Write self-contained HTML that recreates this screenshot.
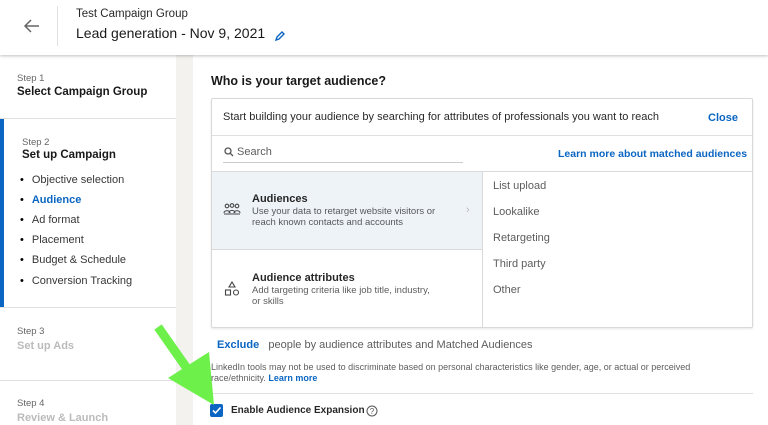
<!DOCTYPE html>
<html><head><style>
*{margin:0;padding:0;box-sizing:border-box}
body{width:768px;height:425px;overflow:hidden;background:#f3f2ef;font-family:"Liberation Sans",Arial,sans-serif;position:relative;color:#000}
.a{position:absolute;white-space:nowrap}
.hdr{left:0;top:0;width:768px;height:55px;background:#fff;box-shadow:0 1px 3px rgba(0,0,0,.25);z-index:2}
.side{left:0;top:55px;width:176px;height:370px;background:#fff}
.main{left:193px;top:55px;width:575px;height:370px;background:#fff}
.sm{font-size:9.5px;color:#666}
.bold{font-size:11.5px;font-weight:bold;color:rgba(0,0,0,.9)}
.li{font-size:11px;color:rgba(0,0,0,.8);left:20px}
.li:before{content:"•";margin-right:8px;color:#000}
.blue{color:#0a66c2}
.g{color:rgba(0,0,0,.65)}
</style></head><body>
<div class="a hdr">
 <svg class="a" style="left:22px;top:16px" width="20" height="20" viewBox="0 0 20 20"><path d="M17 10H3M9 4L3 10l6 6" fill="none" stroke="#666" stroke-width="1.5"/></svg>
 <div class="a" style="left:57px;top:6px;width:1px;height:40px;background:#e0e0e0"></div>
 <div class="a" style="left:76px;top:8px;font-size:11.5px;color:rgba(0,0,0,.85)">Test Campaign Group</div>
 <div class="a" style="left:76px;top:25px;font-size:14px;color:rgba(0,0,0,.9)">Lead generation - Nov 9, 2021</div>
 <svg class="a" style="left:274px;top:30px" width="12" height="12" viewBox="0 0 12 12"><path d="M2 10l1-3 5-5 2 2-5 5z" fill="none" stroke="#0a66c2" stroke-width="1.4"/></svg>
</div>
<div class="a side">
 <div class="a sm" style="left:17px;top:18px">Step 1</div>
 <div class="a bold" style="left:17px;top:31px">Select Campaign Group</div>
 <div class="a" style="left:0;top:63px;width:176px;height:1px;background:#e0e0e0"></div>
 <div class="a" style="left:0;top:64px;width:4px;height:188px;background:#0a66c2"></div>
 <div class="a sm" style="left:22px;top:82px">Step 2</div>
 <div class="a bold" style="left:22px;top:94px">Set up Campaign</div>
 <div class="a li" style="top:119px">Objective selection</div>
 <div class="a li" style="top:139px"><span class="blue" style="font-weight:bold">Audience</span></div>
 <div class="a li" style="top:159px">Ad format</div>
 <div class="a li" style="top:179px">Placement</div>
 <div class="a li" style="top:199px">Budget &amp; Schedule</div>
 <div class="a li" style="top:220px">Conversion Tracking</div>
 <div class="a" style="left:0;top:252px;width:176px;height:1px;background:#e0e0e0"></div>
 <div class="a sm" style="left:17px;top:271px">Step 3</div>
 <div class="a" style="left:17px;top:285px;font-size:11px;font-weight:bold;color:#bbb">Set up Ads</div>
 <div class="a" style="left:0;top:325px;width:176px;height:1px;background:#e0e0e0"></div>
 <div class="a sm" style="left:17px;top:343px">Step 4</div>
 <div class="a" style="left:17px;top:357px;font-size:11px;font-weight:bold;color:#bbb">Review &amp; Launch</div>
</div>
<div class="a main"></div>
<div class="a" style="left:211px;top:74px;font-size:12.5px;font-weight:bold;color:rgba(0,0,0,.9)">Who is your target audience?</div>
<div class="a" style="left:211px;top:98px;width:542px;height:230px;border:1px solid #d9d9d9;border-radius:2px;background:#fff;box-shadow:0 1px 2px rgba(0,0,0,.1)">
 <div class="a" style="left:11px;top:12px;font-size:11px;color:rgba(0,0,0,.85)">Start building your audience by searching for attributes of professionals you want to reach</div>
 <div class="a blue" style="left:496px;top:13px;font-size:11px;font-weight:bold">Close</div>
 <div class="a" style="left:0;top:36px;width:540px;height:1px;background:#e0e0e0"></div>
 <svg class="a" style="left:12px;top:48px" width="10" height="10" viewBox="0 0 10 10"><circle cx="4" cy="4" r="3" fill="none" stroke="#555" stroke-width="1.3"/><path d="M6.3 6.3L9 9" stroke="#555" stroke-width="1.3"/></svg>
 <div class="a g" style="left:25px;top:47px;font-size:11px">Search</div>
 <div class="a" style="left:11px;top:63px;width:240px;height:1px;background:#ccc"></div>
 <div class="a blue" style="left:346px;top:49px;font-size:10.5px;font-weight:bold">Learn more about matched audiences</div>
 <div class="a" style="left:0;top:72px;width:540px;height:1px;background:#d9d9d9"></div>
 <div class="a" style="left:0;top:73px;width:270px;height:77px;background:#eef3f8"></div>
 <div class="a" style="left:270px;top:73px;width:1px;height:156px;background:#d9d9d9"></div>
 <div class="a" style="left:0;top:150px;width:270px;height:1px;background:#d9d9d9"></div>
 <svg class="a" style="left:11px;top:104px" width="18" height="12" viewBox="0 0 18 12" fill="none" stroke="#444" stroke-width="1.1"><circle cx="4" cy="3" r="1.8"/><circle cx="9" cy="2.5" r="1.8"/><circle cx="14" cy="3" r="1.8"/><path d="M1 10c0-3 6-3 6 0M6 10c0-3.5 6-3.5 6 0M11 10c0-3 6-3 6 0M1 11h16"/></svg>
 <div class="a" style="left:40px;top:94px;font-size:11px;font-weight:bold;color:rgba(0,0,0,.85)">Audiences</div>
 <div class="a g" style="left:40px;top:107px;font-size:9.5px;line-height:11px">Use your data to retarget website visitors or<br>reach known contacts and accounts</div>
 <div class="a" style="left:254px;top:105px;font-size:11px;color:#bbb">›</div>
 <svg class="a" style="left:12px;top:182px" width="16" height="16" viewBox="0 0 16 16" fill="none" stroke="#444" stroke-width="1.1"><path d="M8 1l3 5H5z"/><rect x="1.5" y="9" width="5" height="5"/><circle cx="12" cy="11.5" r="2.5"/></svg>
 <div class="a" style="left:40px;top:173px;font-size:11px;font-weight:bold;color:rgba(0,0,0,.85)">Audience attributes</div>
 <div class="a g" style="left:40px;top:186px;font-size:9.5px;line-height:11px">Add targeting criteria like job title, industry,<br>or skills</div>
 <div class="a g" style="left:281px;top:74px;font-size:11px;line-height:26px">List upload<br>Lookalike<br>Retargeting<br>Third party<br>Other</div>
</div>
<div class="a" style="left:217px;top:339px;font-size:11px"><b class="blue">Exclude</b>&nbsp;&nbsp; <span class="g">people by audience attributes and Matched Audiences</span></div>
<div class="a g" style="left:211px;top:362px;font-size:9px;line-height:11px">LinkedIn tools may not be used to discriminate based on personal characteristics like gender, age, or actual or perceived<br>race/ethnicity. <b class="blue">Learn more</b></div>
<div class="a" style="left:211px;top:393px;width:542px;height:1px;background:#e0e0e0"></div>
<div class="a" style="left:210px;top:404px;width:13px;height:13px;background:#0a66c2;border-radius:2px"></div>
<svg class="a" style="left:210px;top:404px" width="13" height="13" viewBox="0 0 13 13"><path d="M3 6.5l2.5 2.5L10.5 3.5" fill="none" stroke="#fff" stroke-width="1.6"/></svg>
<div class="a" style="left:231px;top:405px;font-size:10px;font-weight:bold;color:rgba(0,0,0,.85)">Enable Audience Expansion</div>
<svg class="a" style="left:366px;top:405px" width="12" height="12" viewBox="0 0 12 12"><circle cx="6" cy="6" r="5" fill="none" stroke="#555"/><text x="6" y="9" font-size="8" text-anchor="middle" fill="#555" font-family="Liberation Sans">?</text></svg>
<svg class="a" style="left:0;top:0;z-index:3" width="768" height="425"><path d="M158 327L186 367" stroke="#6df04a" stroke-width="9"/><path d="M168 378L209 352L214 405Z" fill="#6df04a"/></svg>
</body></html>
